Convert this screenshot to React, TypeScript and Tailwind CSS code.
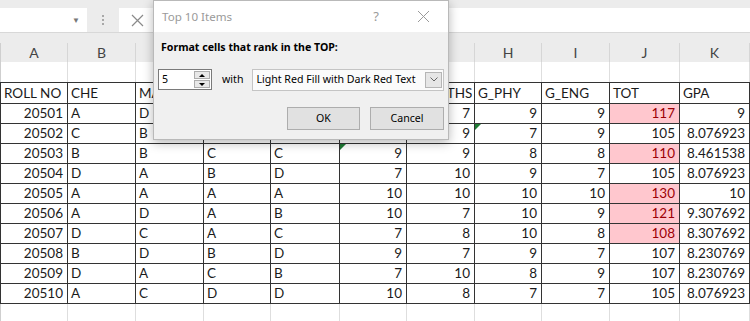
import React from 'react'

const colW = ['w-[67px]', 'w-[68px]', 'w-[68px]', 'w-[67px]', 'w-[69px]', 'w-[67px]', 'w-[68px]', 'w-[67px]', 'w-[68px]', 'w-[70px]']
const letters = ['A', 'B', 'C', 'D', 'E', 'F', 'G', 'H', 'I', 'J', 'K']
const headers = ['ROLL NO', 'CHE', 'MATHS', 'PHY', 'ENG', 'G_CHE', 'G_MATHS', 'G_PHY', 'G_ENG', 'TOT', 'GPA']

const rows = [
  ['20501', 'A', 'D', 'A', 'B', '10', '7', '9', '9', '117', '9'],
  ['20502', 'C', 'B', 'B', 'C', '9', '9', '7', '9', '105', '8.076923'],
  ['20503', 'B', 'B', 'C', 'C', '9', '9', '8', '8', '110', '8.461538'],
  ['20504', 'D', 'A', 'B', 'D', '7', '10', '9', '7', '105', '8.076923'],
  ['20505', 'A', 'A', 'A', 'A', '10', '10', '10', '10', '130', '10'],
  ['20506', 'A', 'D', 'A', 'B', '10', '7', '10', '9', '121', '9.307692'],
  ['20507', 'D', 'C', 'A', 'C', '7', '8', '10', '8', '108', '8.307692'],
  ['20508', 'B', 'D', 'B', 'D', '9', '7', '9', '7', '107', '8.230769'],
  ['20509', 'D', 'A', 'C', 'B', '7', '10', '8', '9', '107', '8.230769'],
  ['20510', 'A', 'C', 'D', 'D', '10', '8', '7', '7', '105', '8.076923'],
]

const top5 = ['117', '110', '130', '121', '108']
// green "number stored as text" markers: row-col
const flags = ['1-7', '2-5']

export default function App() {
  return (
    <div className="relative w-[750px] h-[321px] overflow-hidden bg-white font-['Lato',sans-serif] text-[13.5px] text-[#1b1b1b]">
      {/* formula bar */}
      <div className="h-[33px] bg-[#ececec] border-b border-[#d8d8d8] flex items-end">
        <div className="w-[87px] h-[24px] bg-white flex items-center justify-end pr-[7px]">
          <span className="text-[8px] text-[#777]">▼</span>
        </div>
        <div className="w-[32px] h-[24px] flex flex-col items-center justify-center gap-[2px]">
          <span className="w-[2px] h-[2px] bg-[#a8a8a8]" />
          <span className="w-[2px] h-[2px] bg-[#a8a8a8]" />
          <span className="w-[2px] h-[2px] bg-[#a8a8a8]" />
        </div>
        <div className="flex-1 h-[24px] bg-white flex items-center pl-[12px]">
          <svg width="13" height="13" viewBox="0 0 13 13">
            <path d="M1 1 L12 12 M12 1 L1 12" stroke="#8a8a8a" strokeWidth="1.2" />
          </svg>
        </div>
      </div>
      <div className="h-[10px] bg-[#ececec]" />

      {/* column letters */}
      <div className="flex h-[19px] bg-[#ececec] text-[14px] text-[#444]">
        <div className="w-[3px] border-r border-[#cfcfcf]" />
        {letters.map((l, i) => (
          <div key={l} className={`${colW[i] ?? 'w-[70px]'} shrink-0 border-r border-[#d6d6d6] flex items-center justify-center`}>{l}</div>
        ))}
      </div>

      {/* blank row 1 */}
      <div className="flex h-[21px] border-b border-[#333]">
        <div className="w-[3px] bg-[#ececec] border-r border-[#cfcfcf]" />
        {letters.map((l, i) => (
          <div key={l} className={`${colW[i] ?? 'w-[70px]'} shrink-0 border-r border-[#dedede]`} />
        ))}
      </div>

      {/* header row */}
      <div className="flex h-[21px] border-b border-[#333]">
        <div className="w-[3px] bg-[#ececec] border-r border-[#333]" />
        {headers.map((h, i) => (
          <div key={h} className={`${colW[i] ?? 'w-[70px]'} shrink-0 border-r border-[#333] flex items-center pl-[3px] whitespace-nowrap overflow-hidden`}>{h}</div>
        ))}
      </div>

      {/* data */}
      {rows.map((r, ri) => (
        <div key={r[0]} className="flex h-[20px] border-b border-[#333]">
          <div className="w-[3px] bg-[#ececec] border-r border-[#333]" />
          {r.map((v, ci) => {
            const num = ci === 0 || ci >= 5
            const hot = ci === 9 && top5.includes(v)
            return (
              <div key={ci}
                className={`relative ${colW[ci] ?? 'w-[70px]'} shrink-0 border-r border-[#333] flex items-center whitespace-nowrap ${num ? 'justify-end pr-[4px]' : 'pl-[3px]'} ${hot ? 'bg-[#ffc7ce] text-[#9c0006]' : ''}`}>
                {flags.includes(`${ri}-${ci}`) && (
                  <span className="absolute left-0 top-0 w-0 h-0 border-t-[6px] border-r-[6px] border-t-[#1e7b34] border-r-transparent" />
                )}
                {v}
              </div>
            )
          })}
        </div>
      ))}

      {/* blank row below */}
      <div className="flex h-[20px]">
        <div className="w-[3px] bg-[#ececec] border-r border-[#cfcfcf]" />
        {letters.map((l, i) => (
          <div key={l} className={`${colW[i] ?? 'w-[70px]'} shrink-0 border-r border-[#dedede]`} />
        ))}
      </div>

      {/* Top 10 Items dialog */}
      <div className="absolute left-[153px] top-0 w-[296px] h-[140px] bg-[#f0f0f0] border border-[#b9b9b9] shadow-[0_3px_10px_rgba(0,0,0,0.28)] font-['Noto_Sans',sans-serif] text-[10.6px] text-black flex flex-col">
        <div className="h-[31px] bg-white flex items-center pl-[8px] pr-[18px] text-[#9a9a9a]">
          <span className="text-[11.6px]">Top 10 Items</span>
          <span className="ml-auto text-[13px] mr-[38px]">?</span>
          <svg width="13" height="13" viewBox="0 0 13 13">
            <path d="M1 1 L12 12 M12 1 L1 12" stroke="#9a9a9a" strokeWidth="1" />
          </svg>
        </div>
        <div className="pl-[7px] pt-[7px] h-[16px] leading-[16px] font-bold box-content">Format cells that rank in the TOP:</div>
        <div className="flex items-center pl-[4px] mt-[14px] h-[21px]">
          <div className="w-[54px] h-[21px] bg-white border border-[#7a7a7a] flex items-center">
            <span className="pl-[3px] flex-1">5</span>
            <div className="w-[16px] h-[17px] mr-[1px] flex flex-col gap-[1px]">
              <div className="flex-1 bg-[#e8e8e8] border border-[#adadad] flex items-center justify-center">
                <span className="w-0 h-0 border-l-[3px] border-r-[3px] border-b-[3px] border-l-transparent border-r-transparent border-b-black" />
              </div>
              <div className="flex-1 bg-[#e8e8e8] border border-[#adadad] flex items-center justify-center">
                <span className="w-0 h-0 border-l-[3px] border-r-[3px] border-t-[3px] border-l-transparent border-r-transparent border-t-black" />
              </div>
            </div>
          </div>
          <span className="ml-[10px]">with</span>
          <div className="ml-[9px] w-[192px] h-[22px] bg-[#fbfbfb] border border-[#c4c4c4] flex items-center pl-[3px]">
            <span className="flex-1 whitespace-nowrap">Light Red Fill with Dark Red Text</span>
            <div className="w-[17px] h-[16px] mr-[1px] bg-[#e6e6e6] border border-[#b5b5b5] flex items-center justify-center">
              <svg width="8" height="5" viewBox="0 0 8 5">
                <path d="M0.5 0.5 L4 4 L7.5 0.5" fill="none" stroke="#666" strokeWidth="1" />
              </svg>
            </div>
          </div>
        </div>
        <div className="flex justify-end gap-[10px] pr-[4px] mt-[17px]">
          <button className="w-[73px] h-[23px] bg-[#e1e1e1] border border-[#adadad]">OK</button>
          <button className="w-[74px] h-[23px] bg-[#e1e1e1] border border-[#adadad]">Cancel</button>
        </div>
      </div>
    </div>
  )
}
